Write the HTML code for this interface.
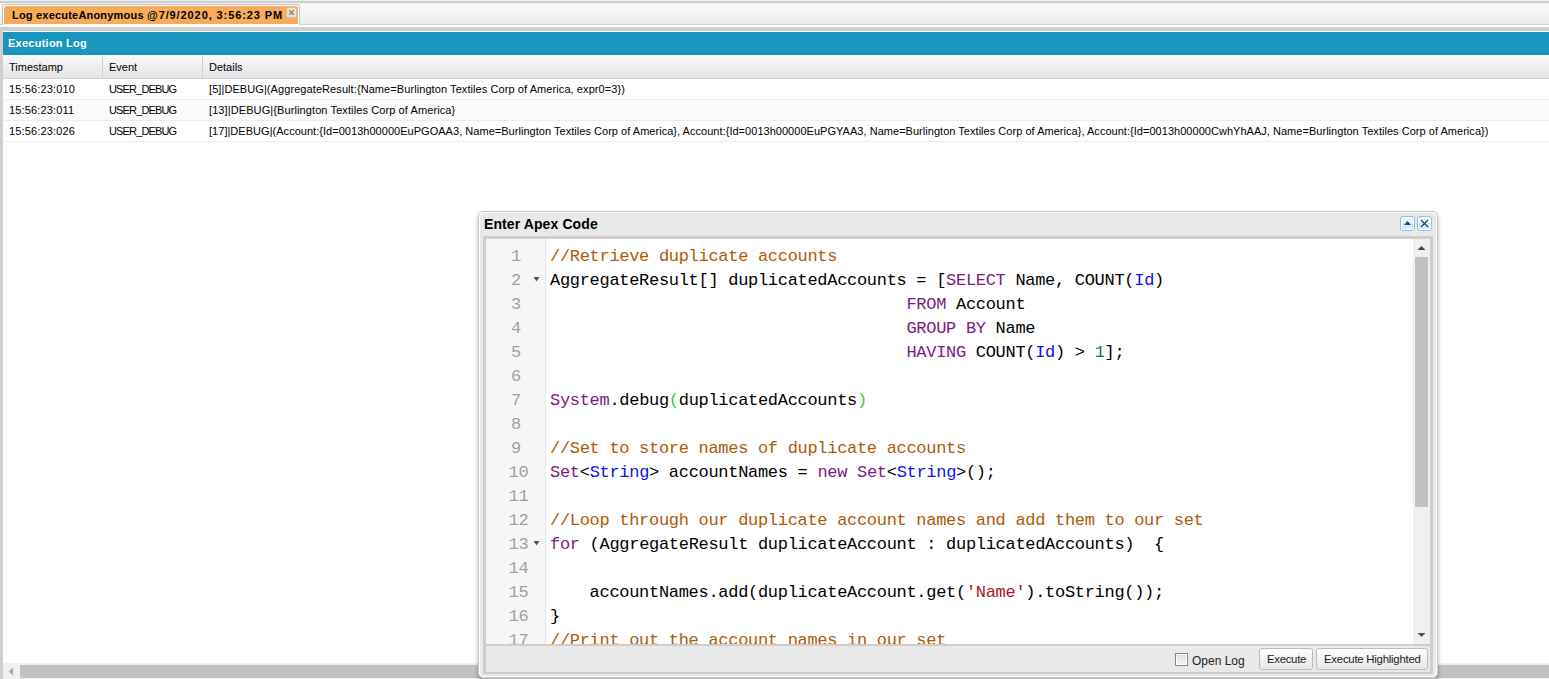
<!DOCTYPE html>
<html><head><meta charset="utf-8">
<style>
*{box-sizing:border-box;margin:0;padding:0}
html,body{width:1549px;height:679px;overflow:hidden;background:#fff}
body{position:relative;font-family:"Liberation Sans",sans-serif;font-size:11px;color:#000}
.a{position:absolute}
.t{position:absolute;white-space:pre;line-height:14px}
.c{color:#ad5b0a}.k{color:#7d1a87}.b{color:#1010f0}.g{color:#2a6b4c}.s{color:#a8151a}.lg{color:#22d822}
</style></head><body>
<!-- top strip -->
<div class="a" style="left:0;top:0;width:1549px;height:1px;background:#efefef"></div>
<div class="a" style="left:0;top:1px;width:1549px;height:2px;background:#cecece"></div>
<div class="a" style="left:0;top:3px;width:1549px;height:1px;background:#f3f3f3"></div>
<div class="a" style="left:0;top:4px;width:1549px;height:20px;background:linear-gradient(#fafafa,#ececec)"></div>
<div class="a" style="left:0;top:24px;width:1549px;height:1px;background:#d4d4d4"></div>
<!-- tab -->
<div class="a" style="left:2px;top:4px;width:298px;height:21px;border:1px solid #c2c2c2;border-bottom:0;border-radius:3px 3px 0 0;background:#fff"></div>
<div class="a" style="left:4px;top:6px;width:294px;height:18px;background:#f8ab5b;border-radius:2px 2px 0 0"></div>
<div class="a" style="left:3px;top:24px;width:296px;height:1px;background:#fff"></div>
<div class="t" style="left:12px;top:8px;font-weight:bold" id="tabtxt"><span style="letter-spacing:0.2px">Log executeAnonymous </span><span style="letter-spacing:0.9px">@7/9/2020, 3:56:23 PM</span></div>
<div class="a" style="left:286px;top:7px;width:11px;height:11px;border:1px solid #c9c3bb;border-radius:2px;background:#f6dfc0"></div>
<svg class="a" style="left:286px;top:7px" width="11" height="11"><path d="M3.2 3.2L7.8 7.8M7.8 3.2L3.2 7.8" stroke="#8a8a8a" stroke-width="1.6"/></svg>
<!-- white gap + gray band -->
<div class="a" style="left:0;top:25px;width:1549px;height:2px;background:#fff"></div>
<div class="a" style="left:0;top:27px;width:1549px;height:4px;background:#d0d0d0"></div>
<div class="a" style="left:0;top:27px;width:3px;height:652px;background:#d0d0d0"></div>
<div class="a" style="left:3px;top:31px;width:1546px;height:1px;background:#fafafa"></div>
<!-- blue header -->
<div class="a" style="left:3px;top:32px;width:1546px;height:23px;background:#1996c0"></div>
<div class="t" style="left:8px;top:36px;color:#fff;font-weight:bold;letter-spacing:0.25px" id="exectxt">Execution Log</div>
<!-- grid header -->
<div class="a" style="left:3px;top:55px;width:1546px;height:23px;background:linear-gradient(#f9f9f9,#e4e5e7)"></div>
<div class="a" style="left:3px;top:78px;width:1546px;height:1px;background:#d0d0d0"></div>
<div class="a" style="left:102px;top:56px;width:1px;height:22px;background:#d0d0d0"></div>
<div class="a" style="left:202px;top:56px;width:1px;height:22px;background:#d0d0d0"></div>
<div class="t" style="left:9px;top:60px">Timestamp</div>
<div class="t" style="left:109px;top:60px">Event</div>
<div class="t" style="left:209px;top:60px">Details</div>
<!-- rows -->
<div class="a" style="left:3px;top:99px;width:1546px;height:1px;background:#ededed"></div>
<div class="a" style="left:3px;top:100px;width:1546px;height:20px;background:#fafafa"></div>
<div class="a" style="left:3px;top:120px;width:1546px;height:1px;background:#ededed"></div>
<div class="a" style="left:3px;top:141px;width:1546px;height:1px;background:#ededed"></div>
<div class="t" style="left:9px;top:82px"><span style="letter-spacing:0.15px">15:56:23:010</span></div>
<div class="t" style="left:109px;top:82px" ><span style="letter-spacing:-0.85px">USER_DEBUG</span></div>
<div class="t" style="left:209px;top:82px" id="r1"><span style="letter-spacing:0.08px">[5]|DEBUG|(AggregateResult:{Name=Burlington Textiles Corp of America, expr0=3})</span></div>
<div class="t" style="left:9px;top:103px"><span style="letter-spacing:0.15px">15:56:23:011</span></div>
<div class="t" style="left:109px;top:103px" ><span style="letter-spacing:-0.85px">USER_DEBUG</span></div>
<div class="t" style="left:209px;top:103px" id="r2"><span style="letter-spacing:0.1px">[13]|DEBUG|{Burlington Textiles Corp of America}</span></div>
<div class="t" style="left:9px;top:124px"><span style="letter-spacing:0.15px">15:56:23:026</span></div>
<div class="t" style="left:109px;top:124px" ><span style="letter-spacing:-0.85px">USER_DEBUG</span></div>
<div class="t" style="left:209px;top:124px" id="r3"><span style="letter-spacing:0.032px">[17]|DEBUG|(Account:{Id=0013h00000EuPGOAA3, Name=Burlington Textiles Corp of America}, Account:{Id=0013h00000EuPGYAA3, Name=Burlington Textiles Corp of America}, Account:{Id=0013h00000CwhYhAAJ, Name=Burlington Textiles Corp of America})</span></div>

<!-- bottom horizontal scrollbar -->
<div class="a" style="left:3px;top:663px;width:1546px;height:16px;background:#f0f0f0"></div>
<div class="a" style="left:20px;top:665px;width:1529px;height:13px;background:#c1c1c1"></div>
<svg class="a" style="left:3px;top:663px" width="16" height="16"><path d="M6 8.5L10 4.5V12.5Z" fill="#a3a3a3"/></svg>


<!-- DIALOG -->
<div class="a" style="left:478px;top:211px;width:960px;height:467px;border:1px solid #c6c6c6;border-radius:5px;background:#fff;box-shadow:0 3px 4px rgba(0,0,0,0.3)"></div>
<div class="a" style="left:480px;top:213px;width:956px;height:463px;border-radius:4px;background:#e9e9e9"></div>
<div class="t" style="left:484px;top:216px;font-weight:bold;font-size:14px;line-height:16px;letter-spacing:0.1px" id="dtitle">Enter Apex Code</div>
<!-- title buttons -->
<div class="a" style="left:1400px;top:216px;width:15px;height:15px;border:1px solid #99bbe8;border-radius:3px;background:#fff"></div>
<div class="a" style="left:1402px;top:218px;width:11px;height:11px;background:linear-gradient(#e8f7ff 0,#e8f7ff 45%,#d4eaff 45%,#d4eaff 100%)"></div>
<svg class="a" style="left:1400px;top:216px" width="15" height="15"><path d="M4 9L7.5 5L11 9Z" fill="#1e3ea8"/></svg>
<div class="a" style="left:1417px;top:216px;width:15px;height:15px;border:1px solid #99bbe8;border-radius:3px;background:#fff"></div>
<div class="a" style="left:1419px;top:218px;width:11px;height:11px;background:linear-gradient(#e8f7ff 0,#e8f7ff 45%,#d4eaff 45%,#d4eaff 100%)"></div>
<svg class="a" style="left:1417px;top:216px" width="15" height="15"><path d="M4 4L11 11M11 4L4 11" stroke="#253a8e" stroke-width="1.3"/></svg>
<!-- editor frame -->
<div class="a" style="left:483px;top:236px;width:950px;height:438px;background:#d0cdcc"></div>
<div class="a" style="left:486px;top:239px;width:944px;height:405px;background:#fff;overflow:hidden">
  <div class="a" style="left:0;top:0;width:60px;height:405px;background:#f6f6f6;border-right:1px solid #e4e4e4"></div>
  <div class="a" style="left:927px;top:0;width:17px;height:405px;background:#f0f0f0"></div>
  <div class="a" style="left:929px;top:18px;width:13px;height:250px;background:#c1c1c1"></div>
  <svg class="a" style="left:927px;top:0" width="17" height="405"><path d="M4.5 11L8.5 7L12.5 11Z" fill="#444"/><path d="M4.5 394L8.5 398L12.5 394Z" fill="#505050"/></svg>
  <div id="gut" class="a" style="left:25px;top:6px;font-family:'Liberation Mono',monospace;font-size:17px;letter-spacing:-0.3px;line-height:24px;color:#a0a0a0;white-space:pre">1
2
3
4
5
6
7
8
9</div>
  <div id="gut2" class="a" style="left:22.5px;top:222px;font-family:'Liberation Mono',monospace;font-size:17px;letter-spacing:-0.3px;line-height:24px;color:#a0a0a0;white-space:pre">10
11
12
13
14
15
16
17</div>
  <svg class="a" style="left:47px;top:0" width="8" height="405"><path d="M0.5 38L6.5 38L3.5 42.5Z" fill="#555"/><path d="M0.5 302L6.5 302L3.5 306.5Z" fill="#555"/></svg>
  <div id="code" class="a" style="left:64px;top:6px;font-family:'Liberation Mono',monospace;font-size:17px;letter-spacing:-0.3px;line-height:24px;color:#000;white-space:pre"><span class="c">//Retrieve duplicate accounts</span>
AggregateResult[] duplicatedAccounts = [<span class="k">SELECT</span> Name, COUNT(<span class="b">Id</span>)
                                    <span class="k">FROM</span> Account
                                    <span class="k">GROUP</span> <span class="k">BY</span> Name
                                    <span class="k">HAVING</span> COUNT(<span class="b">Id</span>) &gt; <span class="g">1</span>];

<span class="k">System</span>.debug<span class="lg">(</span>duplicatedAccounts<span class="lg">)</span>

<span class="c">//Set to store names of duplicate accounts</span>
<span class="k">Set</span>&lt;<span class="b">String</span>&gt; accountNames = <span class="k">new</span> <span class="k">Set</span>&lt;<span class="b">String</span>&gt;();

<span class="c">//Loop through our duplicate account names and add them to our set</span>
<span class="k">for</span> (AggregateResult duplicateAccount : duplicatedAccounts)  {

    accountNames.add(duplicateAccount.get(<span class="s">'Name'</span>).toString());
}
<span class="c">//Print out the account names in our set</span></div>
</div>
<div class="a" style="left:486px;top:646px;width:944px;height:26px;background:#e9e9e9"></div>
<!-- footer -->
<div class="a" style="left:1175px;top:653px;width:13px;height:13px;border:1px solid #878787;background:linear-gradient(#e0e0e0,#f4f4f4);box-shadow:inset 0 0 0 1px #fff"></div>
<div class="t" style="left:1192px;top:654px;font-size:12px;color:#222">Open Log</div>
<div class="a" style="left:1259px;top:648px;width:54px;height:22px;border:1px solid #bcbcbc;border-radius:3px;background:linear-gradient(#fdfdfd,#e9e9e9)"></div>
<div class="t" style="left:1267px;top:652px;font-size:11.4px;letter-spacing:-0.3px;color:#222">Execute</div>
<div class="a" style="left:1316px;top:648px;width:112px;height:22px;border:1px solid #bcbcbc;border-radius:3px;background:linear-gradient(#fdfdfd,#e9e9e9)"></div>
<div class="t" style="left:1324px;top:652px;font-size:11.4px;letter-spacing:-0.25px;color:#222">Execute Highlighted</div>
</body></html>
